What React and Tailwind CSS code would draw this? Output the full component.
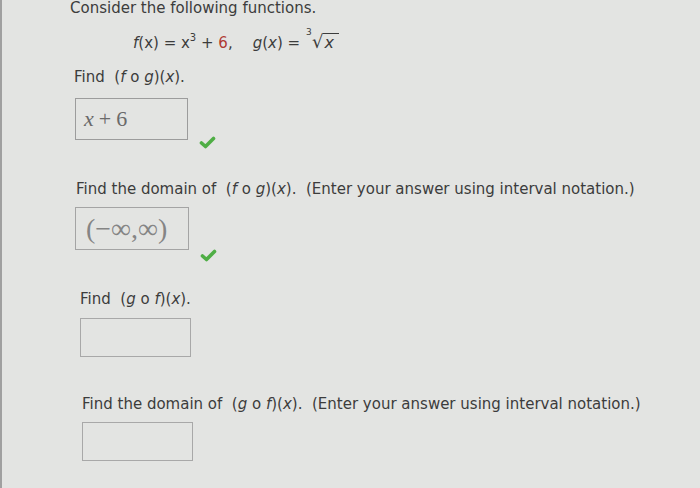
export default function App() {
  const sans = { fontFamily: '"DejaVu Sans", Verdana, sans-serif' };
  const serif = { fontFamily: '"Liberation Serif", "DejaVu Serif", serif' };
  const Check = () => (
    <svg width="17" height="13" viewBox="0 0 17 13" className="block">
      <path d="M2.5 7 L6.5 10.5 L14.5 2.5" fill="none" stroke="#4fae45" strokeWidth="3.6" strokeLinecap="round" strokeLinejoin="round" />
    </svg>
  );
  return (
    <div className="w-[700px] h-[488px] bg-[#e3e4e2] text-[#3c3c3c] text-[15px] border-l-2 border-[#a0a0a0] overflow-hidden" style={sans}>
      <div className="pl-[68px] leading-none">
        <div className="pt-[1px] h-[17px]">Consider the following functions.</div>
        <div className="mt-[16px] pl-[63px] h-[18px] flex items-end">
          <span><span className="italic">f</span>(x) = x<sup className="text-[10px] relative -top-[7px]">3</sup> + <span className="text-[#b03a32]">6</span>,</span>
          <span className="ml-[20px] flex items-end"><span><span className="italic">g</span>(<span className="italic">x</span>) =&nbsp;</span><span className="relative inline-flex items-end pl-[7px]"><span className="absolute top-[-5px] left-[1px] text-[9px]">3</span><span className="text-[18px] leading-none">√</span><span className="border-t border-[#3c3c3c] italic pl-[1px] pr-[5px] text-[16px] leading-[17px]">x</span></span></span>
        </div>
        <div className="mt-[19px] pl-[4px]">Find &nbsp;(<span className="italic">f</span> o <span className="italic">g</span>)(<span className="italic">x</span>).</div>
        <div className="mt-[13px] pl-[5px] flex items-end gap-[11px]">
          <div className="w-[113px] h-[42px] border border-[#9c9c9c] flex items-center pl-[8px] text-[22px] text-[#6a6a6a]" style={serif}>
            <span className="italic">x</span><span className="ml-[5px]">+</span><span className="ml-[5px]">6</span>
          </div>
          <div className="-mb-[9px]"><Check /></div>
        </div>
        <div className="mt-[42px] pl-[6px]">Find the domain of &nbsp;(<span className="italic">f</span> o <span className="italic">g</span>)(<span className="italic">x</span>). &nbsp;(Enter your answer using interval notation.)</div>
        <div className="mt-[10px] pl-[5px] flex items-end gap-[11px]">
          <div className="w-[114px] h-[43px] border border-[#a4a4a4] flex items-center pl-[10px] text-[28px] text-[#858585]" style={serif}>
            (−∞,∞)
          </div>
          <div className="-mb-[12px]"><Check /></div>
        </div>
        <div className="mt-[42px] pl-[10px]">Find &nbsp;(<span className="italic">g</span> o <span className="italic">f</span>)(<span className="italic">x</span>).</div>
        <div className="mt-[11px] pl-[10px]">
          <div className="w-[111px] h-[39px] border border-[#a8a8a8]"></div>
        </div>
        <div className="mt-[40px] pl-[12px]">Find the domain of &nbsp;(<span className="italic">g</span> o <span className="italic">f</span>)(<span className="italic">x</span>). &nbsp;(Enter your answer using interval notation.)</div>
        <div className="mt-[10px] pl-[12px]">
          <div className="w-[111px] h-[39px] border border-[#a8a8a8]"></div>
        </div>
      </div>
    </div>
  );
}
